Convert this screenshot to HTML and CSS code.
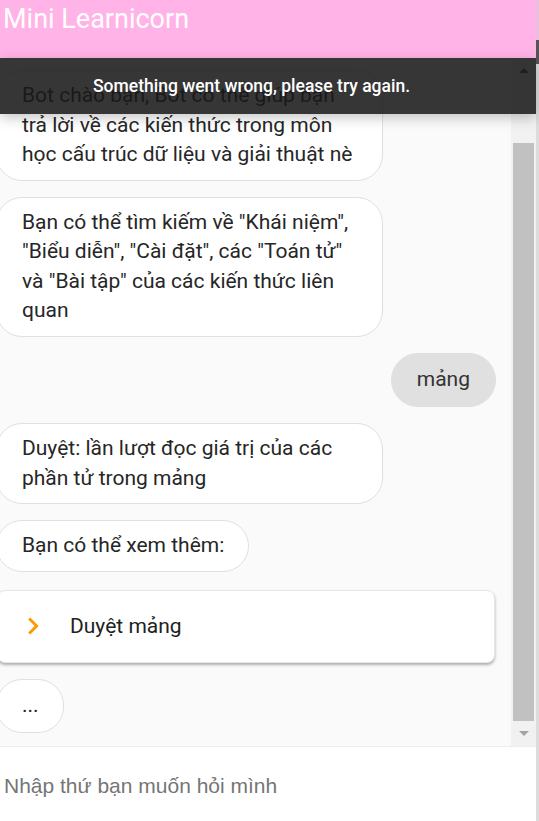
FILE: index.html
```html
<!DOCTYPE html>
<html lang="vi">
<head>
  <meta charset="UTF-8" />
  <meta name="viewport" content="width=device-width, initial-scale=1.0"/>
  <title>Mini Learnicorn</title>
  <link rel="stylesheet" href="styles.css">
</head>
<body>
  <div class="app">
    <header class="topbar">Mini Learnicorn</header>
    <div class="chat-wrap">
      <div class="chat">
        <div class="msg bot">Bot chào bạn, Bot có thể giúp bạn trả lời về các kiến thức trong môn học cấu trúc dữ liệu và giải thuật nè</div>
        <div class="msg bot">Bạn có thể tìm kiếm về "Khái niệm", "Biểu diễn", "Cài đặt", các "Toán tử" và "Bài tập" của các kiến thức liên quan</div>
        <div class="msg user">mảng</div>
        <div class="msg bot">Duyệt: lần lượt đọc giá trị của các phần tử trong mảng</div>
        <div class="msg bot">Bạn có thể xem thêm:</div>
        <div class="suggest">
          <svg class="chevron" viewBox="0 0 24 24" width="34" height="34"><path d="M10 6L8.59 7.41 13.17 12l-4.58 4.59L10 18l6-6z"/></svg>
          <span>Duyệt mảng</span>
        </div>
        <div class="msg bot typing">...</div>
      </div>
      <div class="scrollbar">
        <div class="sb-btn"><span class="arrow-up"></span></div>
        <div class="sb-track"><div class="sb-thumb"></div></div>
        <div class="sb-btn"><span class="arrow-down"></span></div>
      </div>
    </div>
    <div class="composer">
      <input type="text" placeholder="Nhập thứ bạn muốn hỏi mình"/>
    </div>
    <!-- snackbar sits over the chat -->
    <div class="toast">Something went wrong, please try again.</div>
  </div>
  <div class="page-scroll">
    <div class="ps-top"></div>
    <div class="ps-thumb"></div>
    <div class="ps-rest"></div>
  </div>
</body>
</html>
```
FILE: styles.css
```css
body {
  margin: 0;
  height: 821px;
  display: flex;
  overflow: hidden;
  font-family: Roboto, "Noto Sans", sans-serif;
  background: #fff;
}
.app {
  position: relative;
  width: 536px;
  display: flex;
  flex-direction: column;
}
.topbar {
  height: 58px;
  box-sizing: border-box;
  padding: 2px 3px 0;
  background: #ffb3e6;
  color: #fff;
  font-size: 27px;
  line-height: 34px;
}
.chat-wrap {
  flex: 1;
  display: flex;
  min-height: 0;
}
.chat {
  flex: 1;
  display: flex;
  flex-direction: column;
  align-items: flex-start;
  gap: 16px;
  padding: 12px 0 13px;
  background: #fafafa;
  overflow: hidden;
}
.msg {
  box-sizing: border-box;
  max-width: 387px;
  padding: 10px 24px 10px 25px;
  margin-left: -4px;
  border: 1px solid #e0e0e0;
  border-radius: 26px;
  background: #fff;
  color: #262626;
  font-size: 21px;
  line-height: 29.5px;
  flex-shrink: 0;
}
.msg.user {
  align-self: flex-end;
  margin-right: 15px;
  padding: 11.5px 25px;
  border-radius: 28px;
  background: #e0e0e0;
  color: #333;
}
.msg.typing {
  padding-top: 11.5px;
  padding-bottom: 11.5px;
}
.suggest {
  align-self: stretch;
  flex-shrink: 0;
  display: flex;
  align-items: center;
  height: 73px;
  box-sizing: border-box;
  margin: 2px 16px 0 -3px;
  padding-left: 18px;
  border: 1px solid #e6e6e6;
  border-radius: 8px;
  background: #fff;
  box-shadow: 0 2px 3px rgba(0,0,0,.3);
  color: #212121;
  font-size: 21px;
}
.chevron {
  fill: #ff9800;
  margin-right: 20px;
}
.scrollbar {
  width: 25px;
  display: flex;
  flex-direction: column;
  background: #f1f1f1;
}
.sb-btn {
  height: 25px;
  display: flex;
  align-items: center;
  justify-content: center;
}
.arrow-up, .arrow-down {
  width: 0;
  height: 0;
  border-left: 5px solid transparent;
  border-right: 5px solid transparent;
}
.arrow-up { border-bottom: 5px solid #505050; }
.arrow-down { border-top: 5px solid #a3a3a3; }
.sb-track {
  flex: 1;
  display: flex;
  flex-direction: column;
  padding-top: 60px;
}
.sb-thumb {
  flex: 1;
  margin: 0 2px;
  background: #c1c1c1;
}
.composer {
  height: 75px;
  box-sizing: border-box;
  border-top: 1px solid #eee;
  background: #fff;
  display: flex;
}
.composer input {
  flex: 1;
  border: none;
  outline: none;
  padding: 3px 4px 0;
  font-family: "Liberation Sans", Arial, sans-serif;
  font-size: 21px;
  color: #212121;
  background: transparent;
}
.composer input::placeholder { color: #757575; }
.toast {
  position: absolute;
  top: 58px;
  left: 0;
  right: 0;
  height: 56px;
  padding-right: 33px;
  display: flex;
  align-items: center;
  justify-content: center;
  background: rgba(24,24,24,.87);
  box-shadow: 0 4px 12px rgba(0,0,0,.22);
  color: #fff;
  font-size: 17.5px;
  font-weight: 500;
}
.page-scroll {
  width: 3px;
  display: flex;
  flex-direction: column;
}
.ps-top { height: 40px; background: #e9bfe0; }
.ps-thumb { height: 24px; background: #555; }
.ps-rest { flex: 1; background: #dcdcdc; }
```
